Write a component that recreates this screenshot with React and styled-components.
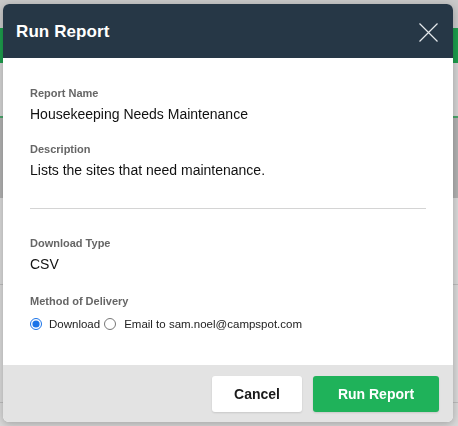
import React, { useState } from "react";
import styled, { createGlobalStyle } from "styled-components";

const GlobalStyle = createGlobalStyle`
  html, body {
    margin: 0;
    padding: 0;
    width: 458px;
    height: 426px;
    overflow: hidden;
    font-family: "Liberation Sans", Arial, sans-serif;
  }
  * { box-sizing: border-box; }
`;

const Page = styled.div`
  width: 458px;
  height: 426px;
  background: #d6d6d6;
  display: flex;
  flex-direction: column;
`;

const TopStrip = styled.div`
  height: 28px;
  background: #c9c9c9;
`;

const GreenBar = styled.div`
  height: 35px;
  background: #1d9d4c;
`;

const SubBar = styled.div`
  height: 55px;
  background: #d3d3d3;
  border-bottom: 2px solid #4aa46a;
`;

const DarkBand = styled.div`
  height: 80px;
  background: #b1b1b1;
`;

const Rows = styled.div`
  flex: 1;
  background: #d9d9d9;
  display: flex;
  flex-direction: column;
`;

const PageRow = styled.div`
  height: ${(p) => p.h}px;
  border-bottom: 1px solid #bdbdbd;
`;

const Modal = styled.div`
  position: fixed;
  top: 4px;
  left: 3px;
  width: 450px;
  height: 418px;
  background: #ffffff;
  border-radius: 6px;
  overflow: hidden;
  box-shadow: 0 2px 8px rgba(0, 0, 0, 0.25);
  display: flex;
  flex-direction: column;
`;

const Header = styled.div`
  height: 54px;
  background: #263746;
  display: flex;
  align-items: center;
  justify-content: space-between;
  padding: 2px 14px 0 13px;
`;

const Title = styled.h2`
  margin: 0;
  color: #ffffff;
  font-size: 17px;
  font-weight: 700;
  letter-spacing: 0.1px;
`;

const CloseButton = styled.button`
  width: 22px;
  height: 22px;
  padding: 0;
  border: none;
  background: transparent;
  display: flex;
  align-items: center;
  justify-content: center;
  cursor: pointer;
`;

const Body = styled.div`
  flex: 1;
  padding: 28px 27px 0 27px;
`;

const Field = styled.div`
  margin-bottom: ${(p) => p.mb ?? 19}px;
`;

const Label = styled.div`
  font-size: 11px;
  font-weight: 700;
  color: #666666;
  line-height: 14px;
  margin-bottom: 5px;
`;

const Value = styled.div`
  font-size: 14px;
  color: #111111;
  line-height: 18px;
`;

const Divider = styled.hr`
  border: none;
  border-top: 1px solid #d4d4d4;
  margin: 29px 0 27px 0;
`;

const RadioRow = styled.div`
  display: flex;
  align-items: center;
  font-size: 11.5px;
  color: #222222;
  margin-top: 10px;
`;

const RadioLabel = styled.label`
  display: flex;
  align-items: center;
  cursor: pointer;
`;

const RadioInput = styled.input`
  width: 12px;
  height: 12px;
  margin: 0 ${(p) => (p.first ? 7 : 8)}px 0 ${(p) => (p.first ? 0 : 4)}px;
  accent-color: #1a73e8;
`;

const Footer = styled.div`
  height: 57px;
  background: #e3e3e3;
  display: flex;
  align-items: center;
  justify-content: flex-end;
  gap: 11px;
  padding: 0 14px 0 0;
`;

const Button = styled.button`
  height: 36px;
  width: ${(p) => p.w}px;
  border: none;
  border-radius: 3px;
  font-family: inherit;
  font-size: 14px;
  font-weight: 700;
  cursor: pointer;
  background: ${(p) => (p.primary ? "#1fb25a" : "#ffffff")};
  color: ${(p) => (p.primary ? "#ffffff" : "#1a1a1a")};
  box-shadow: 0 1px 2px rgba(0, 0, 0, 0.12);
`;

export default function App() {
  const [delivery, setDelivery] = useState("download");

  return (
    <>
      <GlobalStyle />
      <Page>
        <TopStrip />
        <GreenBar />
        <SubBar />
        <DarkBand />
        <Rows>
          <PageRow h={87} />
          <PageRow h={118} />
        </Rows>
      </Page>
      <Modal>
        <Header>
          <Title>Run Report</Title>
          <CloseButton aria-label="Close">
            <svg width="19" height="19" viewBox="0 0 19 19">
              <path d="M0.5 0.5 L18.5 18.5 M18.5 0.5 L0.5 18.5" stroke="#e4e8eb" strokeWidth="1.2" fill="none" />
            </svg>
          </CloseButton>
        </Header>
        <Body>
          <Field>
            <Label>Report Name</Label>
            <Value>Housekeeping Needs Maintenance</Value>
          </Field>
          <Field mb={0}>
            <Label>Description</Label>
            <Value>Lists the sites that need maintenance.</Value>
          </Field>
          <Divider />
          <Field mb={21}>
            <Label>Download Type</Label>
            <Value>CSV</Value>
          </Field>
          <Field mb={0}>
            <Label>Method of Delivery</Label>
            <RadioRow>
              <RadioLabel>
                <RadioInput
                  type="radio"
                  name="delivery"
                  first
                  checked={delivery === "download"}
                  onChange={() => setDelivery("download")}
                />
                Download
              </RadioLabel>
              <RadioLabel>
                <RadioInput
                  type="radio"
                  name="delivery"
                  checked={delivery === "email"}
                  onChange={() => setDelivery("email")}
                />
                Email to sam.noel@campspot.com
              </RadioLabel>
            </RadioRow>
          </Field>
        </Body>
        <Footer>
          <Button w={90}>Cancel</Button>
          <Button w={126} primary>
            Run Report
          </Button>
        </Footer>
      </Modal>
    </>
  );
}
